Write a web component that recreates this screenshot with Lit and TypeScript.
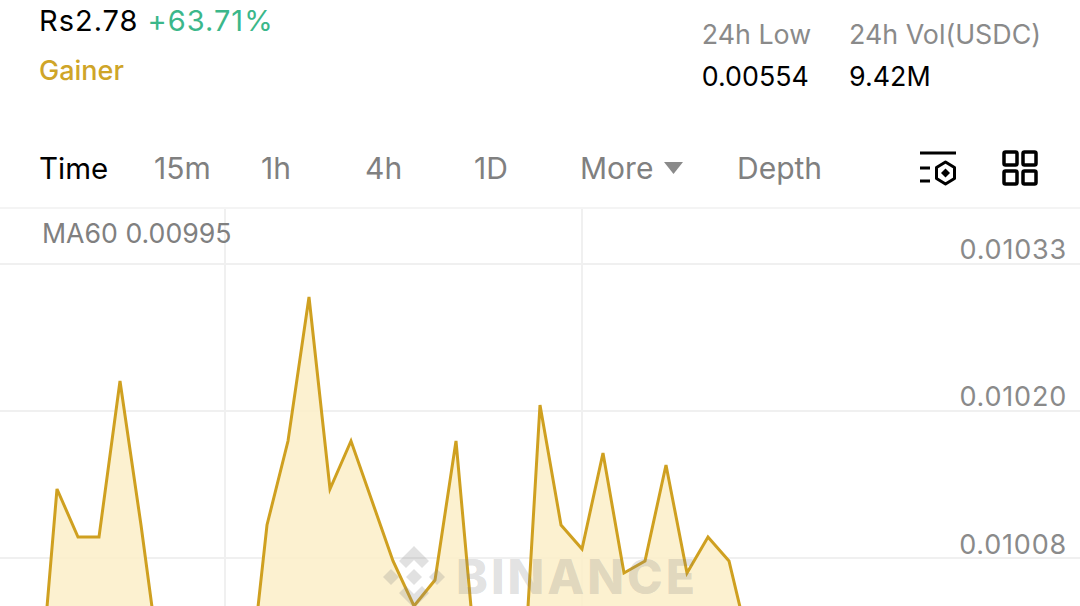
import { LitElement, html, css, svg } from 'lit';
import { customElement } from 'lit/decorators.js';

const runs: number[][][] = [
	[[47, 607], [57, 489], [78, 537], [99, 537], [120, 381], [141, 525], [152, 607]],
	[[258, 607], [267, 525], [288, 441], [309, 297], [330, 489], [351, 441], [372, 501], [393, 561], [414, 606], [435, 580], [456, 441], [471, 607]],
	[[528, 607], [540, 405], [561, 525], [582, 549], [603, 453], [624, 573], [645, 561], [666, 465], [687, 573], [708, 537], [729, 561], [740, 607]],
];
const CHART_TOP = 209;
const TABS = [
	{ label: '15m', width: 107 },
	{ label: '1h', width: 104 },
	{ label: '4h', width: 109 },
	{ label: '1D', width: 106 },
];

@customElement('app-root')
export class AppRoot extends LitElement {
	static styles = css`
		:host {
			display: block;
			width: 1080px;
			height: 606px;
			overflow: hidden;
			background: #fff;
			font-family: Inter, Lato, sans-serif;
			color: #000;
		}
		.head {
			display: flex;
			justify-content: space-between;
			height: 134px;
			padding: 0 39px;
			box-sizing: border-box;
		}
		.price {
			display: flex;
			gap: 9px;
			font-size: 29px;
			line-height: 42px;
			letter-spacing: 1px;
		}
		.up { color: #3bb78a; }
		.gainer {
			margin-top: 12px;
			font-size: 27px;
			line-height: 34px;
			font-weight: 500;
			color: #cfa528;
		}
		.stats {
			display: flex;
			gap: 38px;
			margin-top: 15px;
		}
		.stat-label { font-size: 26.800px; line-height: 38px; color: #8a8a8a; }
		.stat-value { font-size: 26.800px; line-height: 46px; }
		.tabs {
			display: flex;
			align-items: center;
			height: 75px;
			padding: 0 40px 6px 39px;
			box-sizing: border-box;
			border-bottom: 2px solid #f4f4f4;
			font-size: 30px;
			color: #808080;
		}
		.time { color: #000; width: 115px; font-size: 29.500px; }
		.more { display: flex; align-items: center; gap: 11px; width: 157px; }
		.depth { flex: 1; }
		.icons { display: flex; gap: 45px; margin-right: 2px; }
		.chart { position: relative; height: 397px; }
		.chart svg.plot { position: absolute; left: 0; top: 0; }
		.ma {
			position: absolute;
			left: 42px;
			top: 7px;
			font-size: 26.700px;
			line-height: 34px;
			color: #808080;
		}
		.axis {
			position: absolute;
			right: 13px;
			font-size: 27px;
			line-height: 32px;
			letter-spacing: 0.8px;
			color: #8a8a8a;
		}
		.mark {
			position: absolute;
			left: 383px;
			top: 337px;
			display: flex;
			align-items: center;
			gap: 11px;
			color: rgba(130, 130, 130, 0.24);
			font-size: 48px;
			font-weight: 800;
			line-height: 60px;
			letter-spacing: 3px;
		}
	`;

	private plot() {
		const pts = (r: number[][]) => r.map(([x, y]) => `${x},${y - CHART_TOP}`).join(' ');
		return svg`
			<path d="M0 55H1080M0 202H1080M0 349H1080M225 0V397M582 0V397" stroke="#f0f0f0" stroke-width="2" fill="none" />
			${runs.map((r) => svg`
				<polygon points="${pts(r)}" fill="#fbeec8" fill-opacity="0.85" />
				<polyline points="${pts(r)}" fill="none" stroke="#cfa020" stroke-width="3" />
			`)}
		`;
	}

	render() {
		return html`
			<div class="head">
				<div>
					<div class="price"><span>Rs2.78</span><span class="up">+63.71%</span></div>
					<div class="gainer">Gainer</div>
				</div>
				<div class="stats">
					<div>
						<div class="stat-label">24h Low</div>
						<div class="stat-value">0.00554</div>
					</div>
					<div>
						<div class="stat-label">24h Vol(USDC)</div>
						<div class="stat-value">9.42M</div>
					</div>
				</div>
			</div>
			<div class="tabs">
				<span class="time">Time</span>
				${TABS.map((t) => html`<span style="width:${t.width}px">${t.label}</span>`)}
				<span class="more">More
					<svg width="19" height="12" viewBox="0 0 19 12"><path d="M0 0H19L9.500 12Z" fill="#8a8a8a" /></svg>
				</span>
				<span class="depth">Depth</span>
				<div class="icons">
					<svg width="38" height="36" viewBox="0 0 38 36" fill="none" stroke="#000" stroke-width="3">
						<path d="M1 3H37M1 18H11M1 31H11" />
						<path d="M26.500 12L35.500 17.500V28.500L26.500 34L17.500 28.500V17.500Z" stroke-linejoin="round" />
						<path d="M26.500 18.500L31 23L26.500 27.500L22 23Z" fill="#000" stroke="none" />
					</svg>
					<svg width="36" height="36" viewBox="0 0 36 36" fill="none" stroke="#000" stroke-width="3.500">
						<rect x="2" y="2" width="13" height="13" rx="1.500" />
						<rect x="21" y="2" width="13" height="13" rx="1.500" />
						<rect x="2" y="21" width="13" height="13" rx="1.500" />
						<rect x="21" y="21" width="13" height="13" rx="1.500" />
					</svg>
				</div>
			</div>
			<div class="chart">
				<svg class="plot" width="1080" height="397">${this.plot()}</svg>
				<div class="ma">MA60 0.00995</div>
				<div class="axis" style="top:25px">0.01033</div>
				<div class="axis" style="top:172px">0.01020</div>
				<div class="axis" style="top:320px">0.01008</div>
				<div class="mark">
					<svg width="62" height="62" viewBox="0 0 62 62" fill="currentColor">
						<path d="M31 0L46 15L39 22L31 14L23 22L16 15ZM8 23L16 31L8 39L0 31ZM54 23L62 31L54 39L46 31ZM31 23L39 31L31 39L23 31ZM16 47L23 40L31 48L39 40L46 47L31 62Z" />
					</svg>
					<span>BINANCE</span>
				</div>
			</div>
		`;
	}
}
